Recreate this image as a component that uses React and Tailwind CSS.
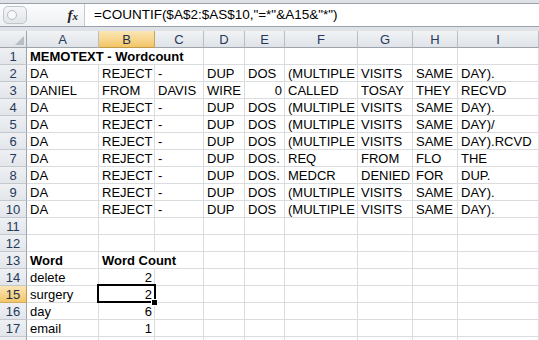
import React from 'react';

const font = { fontFamily: '"Liberation Sans", Arial, sans-serif' };

const colLetters = ['A', 'B', 'C', 'D', 'E', 'F', 'G', 'H', 'I'];

const multi = ['DA', 'REJECT', '-', 'DUP', 'DOS', '(MULTIPLE', 'VISITS', 'SAME'];

// each row: plain strings or { t, bold, right, spill, selected }
const rows = [
    [{ t: 'MEMOTEXT - Wordcount', bold: true, spill: 3 }],
    [...multi, 'DAY).'],
    ['DANIEL', 'FROM', 'DAVIS', 'WIRE', { t: '0', right: true }, 'CALLED', 'TOSAY', 'THEY', 'RECVD'],
    [...multi, 'DAY).'],
    [...multi, 'DAY)/'],
    [...multi, 'DAY).RCVD'],
    ['DA', 'REJECT', '-', 'DUP', 'DOS.', 'REQ', 'FROM', 'FLO', 'THE'],
    ['DA', 'REJECT', '-', 'DUP', 'DOS.', 'MEDCR', 'DENIED', 'FOR', 'DUP.'],
    [...multi, 'DAY).'],
    [...multi, 'DAY).'],
    [],
    [],
    [{ t: 'Word', bold: true }, { t: 'Word Count', bold: true, spill: 2 }],
    ['delete', { t: '2', right: true }],
    ['surgery', { t: '2', right: true, selected: true }],
    ['day', { t: '6', right: true }],
    ['email', { t: '1', right: true }],
    [],
];

const gridCols = 'grid grid-cols-[27px_72px_56px_49px_41px_40px_73px_55px_45px_1fr]';

const FormulaBar = () => (
    <div className="h-[31px] bg-[#dfe3e8] pt-[3px] pb-[4px]">
        <div className="h-full flex border-t border-b border-[#9aa1aa] bg-white">
            <div className="w-[85px] flex items-center bg-gradient-to-b from-[#fbfcfd] to-[#eef0f3] border-r border-[#c5cad1]">
                <div className="ml-[3px] w-[24px] h-[18px] rounded-[5px] border border-[#c0c5cc] bg-gradient-to-b from-[#f4f5f7] to-[#e2e5e9] flex items-center pl-[3px]">
                    <div className="w-[10px] h-[10px] rounded-full border border-[#b7bcc3] bg-[#f7f8f9]" />
                </div>
                <div className="ml-auto mr-[6px] text-[#222] italic leading-none" style={{ fontFamily: '"Liberation Serif", serif' }}>
                    <span className="text-[15px] font-bold">f</span><span className="text-[11px] font-bold">x</span>
                </div>
            </div>
            <div className="flex-1 flex items-center pl-[9px] text-[13.5px] text-black whitespace-nowrap" style={font}>
                =COUNTIF($A$2:$AS$10,"=*"&A15&"*")
            </div>
        </div>
    </div>
);

const HeaderRow = () => (
    <div className={`${gridCols} h-[17px]`}>
        <div className="relative bg-gradient-to-b from-[#f1f3f5] to-[#dfe3e8] border-r border-b border-[#9ea4ac]">
            <div className="absolute right-[2px] bottom-[2px] w-0 h-0 border-l-[9px] border-l-transparent border-b-[9px] border-b-[#b8bdc4]" />
        </div>
        {colLetters.map((c) => (
            <div
                key={c}
                className={`flex items-center justify-center text-[13px] leading-none border-r border-b ${
                    c === 'B'
                        ? 'bg-gradient-to-b from-[#fbe6b5] to-[#f3c666] border-r-[#c9a55a] border-b-[#c29b4a] text-[#1c2f48]'
                        : 'bg-gradient-to-b from-[#f1f3f5] to-[#dfe3e8] border-r-[#b9bec5] border-b-[#9ea4ac] text-[#26395a]'
                }`}
            >
                {c}
            </div>
        ))}
    </div>
);

const Row = ({ n, cells }) => {
    const spillCover = new Set();
    cells.forEach((c, i) => {
        if (c && typeof c === 'object' && c.spill) {
            for (let k = 1; k < c.spill; k++) spillCover.add(i + k);
        }
    });
    return (
        <div className={`${gridCols} h-[17px]`}>
            <div
                className={`flex items-center justify-center text-[13px] leading-none border-r border-b ${
                    n === 15
                        ? 'bg-gradient-to-b from-[#fbe6b5] to-[#f3c666] border-r-[#c29b4a] border-b-[#d1ad62] text-[#1c2f48]'
                        : 'bg-gradient-to-b from-[#eef0f3] to-[#e2e6eb] border-r-[#9ea4ac] border-b-[#c3c8ce] text-[#26395a]'
                }`}
            >
                {n <= 17 ? n : ''}
            </div>
            {colLetters.map((_, i) => {
                const raw = cells[i];
                const c = raw == null ? null : typeof raw === 'string' ? { t: raw } : raw;
                const hideRight = (c && c.spill) || (spillCover.has(i) && spillCover.has(i + 1));
                return (
                    <div
                        key={i}
                        className={`relative border-b border-[#dadcdd] ${hideRight ? '' : 'border-r'} ${c && c.selected ? 'z-10' : ''}`}
                    >
                        {c && (
                            <div
                                className={`absolute inset-y-0 flex items-center pt-px text-[13px] leading-4 text-black whitespace-nowrap ${
                                    c.right ? 'right-[2px]' : 'left-[3px]'
                                } ${c.bold ? 'font-bold' : ''}`}
                            >
                                {c.t}
                            </div>
                        )}
                        {c && c.selected && (
                            <>
                                <div className="absolute -left-[2px] -top-[2px] -right-[2px] -bottom-[1px] border-2 border-black" />
                                <div className="absolute -right-[4px] -bottom-[4px] w-[7px] h-[7px] bg-black border border-white" />
                            </>
                        )}
                    </div>
                );
            })}
        </div>
    );
};

const App = () => {
    return (
        <div className="w-[539px] h-[340px] overflow-hidden bg-white" style={font}>
            <FormulaBar />
            <HeaderRow />
            {rows.map((cells, i) => (
                <Row key={i} n={i + 1} cells={cells} />
            ))}
        </div>
    );
};

export default App;
